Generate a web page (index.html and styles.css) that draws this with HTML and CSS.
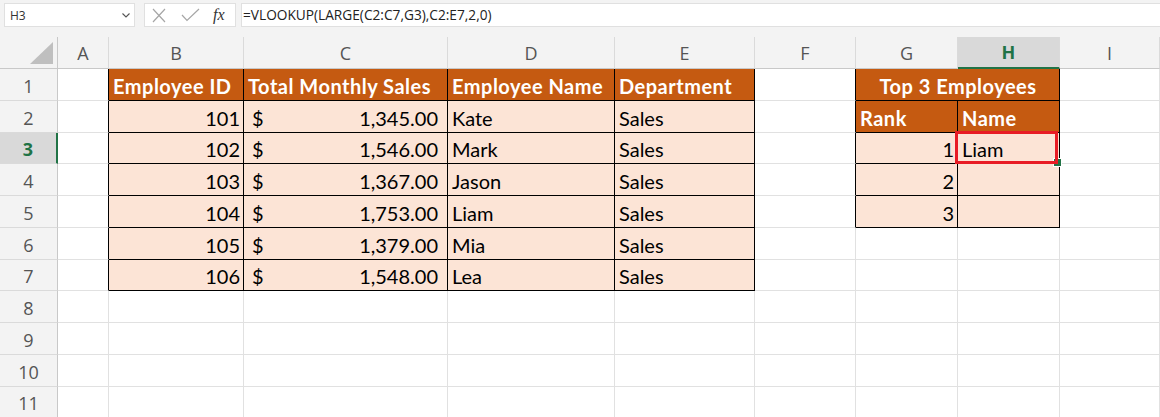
FILE: index.html
```html
<!DOCTYPE html>
<html lang="en">
<head>
    <meta charset="UTF-8">
    <title>Top 3 Employees</title>
    <link rel="stylesheet" href="styles.css">
</head>
<body>

<!-- Name box and formula bar -->
<div class="toolbar">
    <div class="namebox">
        <span>H3</span>
        <svg class="chevron" width="8" height="5" viewBox="0 0 8 5"><polyline points="0.5,0.5 4,4 7.5,0.5" fill="none" stroke="#555" stroke-width="1.1"/></svg>
    </div>
    <div class="fxbox">
        <svg class="cancel" width="14" height="15" viewBox="0 0 14 15"><path d="M1 1 L13 14 M13 1 L1 14" stroke="#a6a6a6" stroke-width="1.2" fill="none"/></svg>
        <svg class="enter" width="19" height="14" viewBox="0 0 19 14"><polyline points="1,7 6,12.5 18,1" fill="none" stroke="#a6a6a6" stroke-width="1.2"/></svg>
        <span class="fx">fx</span>
    </div>
    <div class="formula">=VLOOKUP(LARGE(C2:C7,G3),C2:E7,2,0)</div>
</div>

<!-- Worksheet -->
<div class="sheet">
    <div class="row colheads">
        <div class="corner"><svg width="23" height="22" viewBox="0 0 23 22"><polygon points="23,0 23,22 0,22" fill="#bfbfbf"/></svg></div>
        <div class="ch">A</div>
        <div class="ch">B</div>
        <div class="ch">C</div>
        <div class="ch">D</div>
        <div class="ch">E</div>
        <div class="ch">F</div>
        <div class="ch">G</div>
        <div class="ch active">H</div>
        <div class="ch">I</div>
    </div>

    <div class="row">
        <div class="rh">1</div>
        <div class="c edge-r"></div>
        <div class="c hd">Employee ID</div>
        <div class="c hd">Total Monthly Sales</div>
        <div class="c hd">Employee Name</div>
        <div class="c hd">Department</div>
        <div class="c edge-r"></div>
        <div class="c hd center span2">Top 3 Employees</div>
        <div class="c"></div>
    </div>

    <div class="row">
        <div class="rh">2</div>
        <div class="c edge-r"></div>
        <div class="c dt num">101</div>
        <div class="c dt acct"><span>$</span><span>1,345.00</span></div>
        <div class="c dt">Kate</div>
        <div class="c dt">Sales</div>
        <div class="c edge-r"></div>
        <div class="c hd">Rank</div>
        <div class="c hd">Name</div>
        <div class="c"></div>
    </div>

    <div class="row">
        <div class="rh active">3</div>
        <div class="c edge-r"></div>
        <div class="c dt num">102</div>
        <div class="c dt acct"><span>$</span><span>1,546.00</span></div>
        <div class="c dt">Mark</div>
        <div class="c dt">Sales</div>
        <div class="c edge-r"></div>
        <div class="c dt num">1</div>
        <div class="c dt selected">Liam</div>
        <div class="c"></div>
    </div>

    <div class="row">
        <div class="rh">4</div>
        <div class="c edge-r"></div>
        <div class="c dt num">103</div>
        <div class="c dt acct"><span>$</span><span>1,367.00</span></div>
        <div class="c dt">Jason</div>
        <div class="c dt">Sales</div>
        <div class="c edge-r"></div>
        <div class="c dt num">2</div>
        <div class="c dt"></div>
        <div class="c"></div>
    </div>

    <div class="row">
        <div class="rh">5</div>
        <div class="c edge-r"></div>
        <div class="c dt num">104</div>
        <div class="c dt acct"><span>$</span><span>1,753.00</span></div>
        <div class="c dt">Liam</div>
        <div class="c dt">Sales</div>
        <div class="c edge-r"></div>
        <div class="c dt num">3</div>
        <div class="c dt"></div>
        <div class="c"></div>
    </div>

    <div class="row">
        <div class="rh">6</div>
        <div class="c edge-r"></div>
        <div class="c dt num">105</div>
        <div class="c dt acct"><span>$</span><span>1,379.00</span></div>
        <div class="c dt">Mia</div>
        <div class="c dt">Sales</div>
        <div class="c"></div>
        <div class="c"></div>
        <div class="c"></div>
        <div class="c"></div>
    </div>

    <div class="row">
        <div class="rh">7</div>
        <div class="c edge-r"></div>
        <div class="c dt num">106</div>
        <div class="c dt acct"><span>$</span><span>1,548.00</span></div>
        <div class="c dt">Lea</div>
        <div class="c dt">Sales</div>
        <div class="c"></div>
        <div class="c"></div>
        <div class="c"></div>
        <div class="c"></div>
    </div>

    <div class="row">
        <div class="rh">8</div>
        <div class="c"></div><div class="c"></div><div class="c"></div><div class="c"></div>
        <div class="c"></div><div class="c"></div><div class="c"></div><div class="c"></div><div class="c"></div>
    </div>

    <div class="row">
        <div class="rh">9</div>
        <div class="c"></div><div class="c"></div><div class="c"></div><div class="c"></div>
        <div class="c"></div><div class="c"></div><div class="c"></div><div class="c"></div><div class="c"></div>
    </div>

    <div class="row">
        <div class="rh">10</div>
        <div class="c"></div><div class="c"></div><div class="c"></div><div class="c"></div>
        <div class="c"></div><div class="c"></div><div class="c"></div><div class="c"></div><div class="c"></div>
    </div>

    <div class="row">
        <div class="rh">11</div>
        <div class="c"></div><div class="c"></div><div class="c"></div><div class="c"></div>
        <div class="c"></div><div class="c"></div><div class="c"></div><div class="c"></div><div class="c"></div>
    </div>
</div>

</body>
</html>
```

FILE: styles.css
```css
* {
    box-sizing: border-box;
}

body {
    margin: 0;
    background-color: #fff;
    font-family: Lato, 'Liberation Sans', sans-serif;
    overflow: hidden;
}

/* Formula bar */
.toolbar {
    height: 37px;
    display: flex;
    align-items: flex-start;
    padding: 3px 0 0 4px;
    background-color: #f3f3f3;
    font-family: 'Open Sans', sans-serif;
}

.namebox {
    width: 131px;
    height: 24px;
    display: flex;
    align-items: center;
    padding: 0 4px 0 5px;
    background-color: #fff;
    border: 1px solid #e0e0e0;
    font-size: 12px;
    color: #333;
}

.chevron {
    margin-left: auto;
}

.fxbox {
    width: 92px;
    height: 24px;
    margin-left: 9px;
    display: flex;
    align-items: center;
    padding-left: 7px;
    background-color: #fff;
    border: 1px solid #e0e0e0;
}

.enter {
    margin-left: 15px;
}

.fx {
    margin-left: 13px;
    font-family: 'Liberation Serif', serif;
    font-style: italic;
    font-size: 16px;
    color: #333;
}

.formula {
    flex: 1;
    height: 24px;
    margin-left: 5px;
    padding-left: 1px;
    background-color: #fff;
    border: 1px solid #e0e0e0;
    border-right: none;
    font-size: 13.7px;
    line-height: 22px;
    color: #222;
}

/* Grid */
.row {
    display: grid;
    grid-template-columns: 58px 51px 135px 204px 167px 140px 101px 102px 102px 1fr;
    height: 31.75px;
}

.colheads {
    height: 32px;
    background-color: #f3f3f3;
}

.corner {
    display: flex;
    justify-content: flex-end;
    align-items: flex-end;
    padding: 0 4px 4px 0;
    border-right: 1px solid #c8c8c8;
    border-bottom: 1px solid #c8c8c8;
}

.ch {
    display: flex;
    justify-content: center;
    align-items: center;
    border-right: 1px solid #dadada;
    border-bottom: 1px solid #c8c8c8;
    font-family: 'Open Sans', sans-serif;
    font-size: 18px;
    color: #555;
}

.ch.active {
    background-color: #d9d9d9;
    border-bottom: 2px solid #217346;
    color: #217346;
    font-weight: bold;
}

.rh {
    display: flex;
    justify-content: center;
    align-items: flex-end;
    padding-bottom: 2px;
    background-color: #f3f3f3;
    border-right: 1px solid #c8c8c8;
    border-bottom: 1px solid #dadada;
    font-family: 'Open Sans', sans-serif;
    font-size: 18px;
    line-height: 24px;
    color: #555;
}

.rh.active {
    background-color: #d9d9d9;
    border-right: 2px solid #217346;
    color: #217346;
    font-weight: bold;
}

.c {
    display: flex;
    align-items: flex-end;
    padding: 0 3px 2px 4px;
    border-right: 1px solid #e1e1e1;
    border-bottom: 1px solid #e1e1e1;
    font-size: 20px;
    line-height: 24px;
    color: #000;
    white-space: nowrap;
}

.edge-r {
    border-right-color: #000;
}

.hd {
    background-color: #c55a11;
    border-color: #000;
    color: #fff;
    font-weight: bold;
    letter-spacing: 0.5px;
}

.dt {
    background-color: #fce4d6;
    border-color: #000;
}

.num {
    justify-content: flex-end;
}

.acct {
    justify-content: space-between;
    padding-left: 8px;
    padding-right: 9px;
}

.center {
    justify-content: center;
}

.span2 {
    grid-column: span 2;
}

/* Active cell outline and fill handle */
.selected {
    position: relative;
}

.selected::before {
    content: '';
    position: absolute;
    top: -2px;
    left: -3px;
    right: 1px;
    bottom: -1px;
    border: 3px solid #e81c25;
    z-index: 2;
}

.selected::after {
    content: '';
    position: absolute;
    right: -3px;
    bottom: -4px;
    width: 7px;
    height: 7px;
    background-color: #217346;
    border: 1px solid #fff;
    z-index: 1;
}
```
